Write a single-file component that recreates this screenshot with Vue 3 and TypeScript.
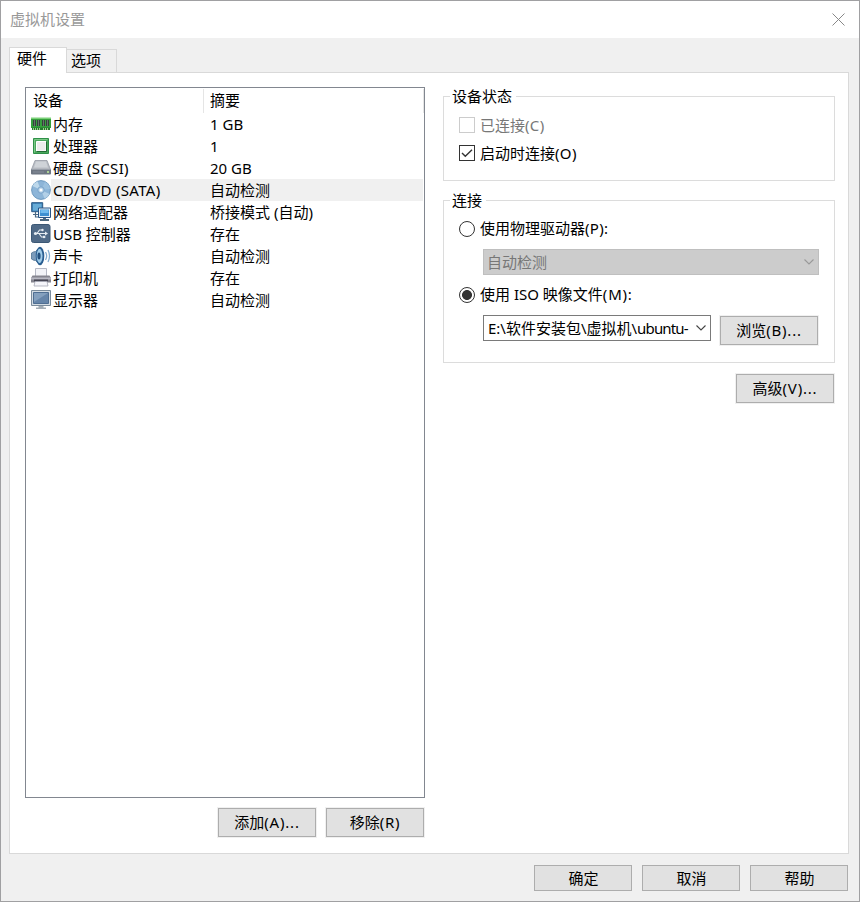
<script setup lang="ts">
import { ref } from 'vue'

interface Device {
  icon: string
  name: string
  latin?: string
  summary: string
}

const devices: Device[] = [
  { icon: 'memory', name: '内存', summary: '1 GB' },
  { icon: 'cpu', name: '处理器', summary: '1' },
  { icon: 'disk', name: '硬盘 ', latin: '(SCSI)', summary: '20 GB' },
  { icon: 'cd', name: '', latin: 'CD/DVD (SATA)', summary: '自动检测' },
  { icon: 'network', name: '网络适配器', summary: '桥接模式 (自动)' },
  { icon: 'usb', name: 'USB 控制器', summary: '存在' },
  { icon: 'sound', name: '声卡', summary: '自动检测' },
  { icon: 'printer', name: '打印机', summary: '存在' },
  { icon: 'display', name: '显示器', summary: '自动检测' },
]
const selected = ref(3)
const connectAtPowerOn = ref(true)
const source = ref<'physical' | 'iso'>('iso')
</script>

<template>
  <div class="window">
    <header class="titlebar">
      <span class="title">虚拟机设置</span>
      <svg class="close" width="13" height="13" viewBox="0 0 13 13"><path d="M.5.5l12 12M12.5.5l-12 12" /></svg>
    </header>

    <nav class="tabs">
      <div class="tab active">硬件</div>
      <div class="tab">选项</div>
    </nav>

    <main class="panel">
      <section class="left">
        <div class="list">
          <div class="head"><span class="c1">设备</span><span class="c2">摘要</span></div>
          <div v-for="(d, i) in devices" :key="d.icon" class="row" @click="selected = i">
            <svg class="icon" width="20" height="20" viewBox="0 0 20 20">
              <template v-if="d.icon === 'memory'">
                <path d="M0 4h20v10H0z" fill="#35a03c" />
                <path d="M0 3.500h20v1.500H0z" fill="#7bd078" />
                <path d="M2 6h3v6H2zM6 6h3v6H6zM11 6h3v6h-3zM15 6h3v6h-3z" fill="#34433a" />
                <path d="M3 6h1v6H3zM7 6h1v6H7zM12 6h1v6h-1zM16 6h1v6h-1z" fill="#64746a" />
                <path d="M1 13.500h18v2.500H1z" fill="#237b2d" />
                <path d="M2.500 14v2M4.500 14v2M6.500 14v2M8.500 14v2M12.500 14v2M14.500 14v2M16.500 14v2" stroke="#c9d9a8" stroke-width=".8" />
              </template>
              <template v-else-if="d.icon === 'cpu'">
                <path d="M2.500 2.500h15v15h-15z" fill="#4aa65c" stroke="#2f9048" />
                <path d="M3.500 16.500V3.500h13" fill="none" stroke="#7cc987" />
                <path d="M5.500 5.500h9.500v9.500H5.500z" fill="#ececec" stroke="#fff" />
                <path d="M15.500 5.500v10h-10" fill="none" stroke="#236b35" />
              </template>
              <template v-else-if="d.icon === 'disk'">
                <path d="M4 2.500h12l3.500 9H.5z" fill="#b9bdc4" stroke="#969ba5" stroke-width=".8" />
                <path d="M5 3.500h10l2 6H3z" fill="#cfd3d8" />
                <rect y="11" width="20" height="5.500" rx="1" fill="#6d7581" />
                <path d="M.5 11.300h19" stroke="#a4aab3" />
                <path d="M2 14h11" stroke="#868e99" />
                <circle cx="17" cy="14" r="1" fill="#c0f09a" />
              </template>
              <template v-else-if="d.icon === 'cd'">
                <circle cx="10" cy="10" r="9.400" fill="#8db5d8" stroke="#6794bb" stroke-width=".9" />
                <path d="M10 10L1.500 6a9 9 0 0 1 5-4.500z" fill="#bdd8eb" />
                <path d="M10 10l8.500 4a9 9 0 0 1-5 4.500z" fill="#b3d0e7" />
                <path d="M10 10l4-8a9 9 0 0 1 5 7z" fill="#9cc1df" />
                <circle cx="10" cy="10" r="3.200" fill="#b3d0e7" stroke="#6e9bc4" stroke-width=".8" />
                <circle cx="10" cy="10" r="1.500" fill="#fff" />
              </template>
              <template v-else-if="d.icon === 'network'">
                <path d="M.7.700h11v9H.7z" fill="#4186bb" stroke="#2b5987" />
                <path d="M2 2h8.500v6.500H2z" fill="#68acd7" />
                <path d="M4.500 10v5h3M2 12.500h5" fill="none" stroke="#496884" stroke-width="1.200" />
                <path d="M7.500 6h12v9.500h-12z" fill="#e2eef6" stroke="#285486" />
                <path d="M9 7.500h9V14H9z" fill="#3d8fd0" />
                <path d="M9.500 8h8v3h-8z" fill="#71bbed" />
                <path d="M12 16h3v1h3v2H9v-2h3z" fill="#4c687f" />
              </template>
              <template v-else-if="d.icon === 'usb'">
                <rect x=".5" y=".5" width="18.500" height="18" rx="2" fill="#506a87" stroke="#3c5875" />
                <path d="M4 9.500h11M6 9.500L8.500 6H11M8 9.500l2.500 3.500H13" fill="none" stroke="#e7edf2" stroke-width="1.100" />
                <circle cx="4.500" cy="9.500" r="1.600" fill="#e7edf2" />
                <path d="M14 7.500l3 2-3 2z" fill="#e7edf2" />
                <circle cx="11.500" cy="6" r="1.200" fill="#e7edf2" />
                <path d="M12 11.800h2.300v2.300H12z" fill="#e7edf2" />
              </template>
              <template v-else-if="d.icon === 'sound'">
                <path d="M.5 7q2-1.500 4-1.500L9 1v18l-4.500-4.500q-2 0-4-1.500z" fill="#7c9cbb" stroke="#4e7292" stroke-width=".8" />
                <ellipse cx="9" cy="10" rx="4.300" ry="9.300" fill="#2a5e91" />
                <ellipse cx="8.600" cy="10" rx="2.900" ry="7.200" fill="#9ecbe8" />
                <ellipse cx="8" cy="10" rx="1.600" ry="3.600" fill="#24517f" />
                <path d="M14.500 6q2.300 4 0 8M17 4q3 6 0 12" fill="none" stroke="#84add0" stroke-width="1.300" />
              </template>
              <template v-else-if="d.icon === 'printer'">
                <path d="M4.500.5h11v8h-11z" fill="#f2f3f7" stroke="#b5b8c4" />
                <path d="M1.500 7.500h17L20 10v4.500H0V10z" fill="#85858f" />
                <path d="M0 9.500h20v2H0z" fill="#b9b9c3" />
                <path d="M3 11.500h14v2H3z" fill="#454552" />
                <path d="M4 13.500h12l1 4.500H3z" fill="#f5f5fa" stroke="#a5a7b4" stroke-width=".8" />
              </template>
              <template v-else>
                <path d="M.5.500h19v15H.5z" fill="#d3dce3" stroke="#7b8c9c" />
                <path d="M2.500 2.500h15v11h-15z" fill="#6685a9" stroke="#4f6e92" />
                <path d="M3 3h14L3 12z" fill="#84a0be" />
                <path d="M7.500 16h5v1.500H15V19H5v-1.500h2.500z" fill="#a3adb6" />
              </template>
            </svg>
            <div class="cells" :class="{ selected: selected === i }">
              <span class="name">{{ d.name }}<span v-if="d.latin" class="wide">{{ d.latin }}</span></span>
              <span class="summary">{{ d.summary }}</span>
            </div>
          </div>
        </div>
        <div class="list-actions">
          <button class="btn">添加<span class="key">(A)...</span></button>
          <button class="btn">移除<span class="key">(R)</span></button>
        </div>
      </section>

      <section class="right">
        <div class="group status">
          <div class="legend"><span>设备状态</span></div>
          <div class="option disabled"><span class="check"></span><span class="text">已连接<span class="wide">(C)</span></span></div>
          <div class="option" @click="connectAtPowerOn = !connectAtPowerOn">
            <span class="check">
              <svg v-if="connectAtPowerOn" width="14" height="14" viewBox="0 0 14 14"><path d="M2 7l3.300 3.300L12 3.700" /></svg>
            </span><span class="text">启动时连接<span class="wide">(O)</span></span>
          </div>
        </div>
        <div class="group connection">
          <div class="legend"><span>连接</span></div>
          <div class="option physical" @click="source = 'physical'">
            <span class="radio" :class="{ on: source === 'physical' }"></span><span class="text">使用物理驱动器<span class="wide">(P):</span></span>
          </div>
          <div class="combo off">
            <span>自动检测</span>
            <svg width="10" height="6" viewBox="0 0 10 6"><path d="M.5.5L5 5 9.500.5" /></svg>
          </div>
          <div class="option iso" @click="source = 'iso'">
            <span class="radio" :class="{ on: source === 'iso' }"></span><span class="text">使用 ISO 映像文件<span class="key">(M):</span></span>
          </div>
          <div class="file">
            <div class="combo">
              <span class="path">E:\软件安装包\虚拟机\<span class="tight">ubuntu-</span></span>
              <svg width="10" height="6" viewBox="0 0 10 6"><path d="M.5.5L5 5 9.500.5" /></svg>
            </div>
            <button class="btn">浏览<span class="key">(B)...</span></button>
          </div>
        </div>
        <button class="btn advanced">高级<span class="key">(V)...</span></button>
      </section>
    </main>

    <footer class="footer">
      <button class="btn">确定</button>
      <button class="btn">取消</button>
      <button class="btn">帮助</button>
    </footer>
    <i class="edge"></i>
  </div>
</template>

<style>
body { margin: 0; }
</style>

<style scoped>
* { box-sizing: border-box; }
.window {
  position: relative;
  width: 860px;
  height: 902px;
  border: 1px solid #a0a0a2;
  background: #f0f0f0;
  color: #000;
  font: 400 15px/20px "Noto Sans", "Noto Sans CJK SC", sans-serif;
  white-space: nowrap;
  overflow: hidden;
}
.wide { letter-spacing: .33px; }
.key { letter-spacing: .8px; }
.tight { letter-spacing: -.85px; }
.edge {
  position: absolute;
  right: -1px;
  top: 306px;
  width: 1px;
  height: 288px;
  background: #1c1c1e;
}
.titlebar {
  display: flex;
  justify-content: space-between;
  height: 37px;
  padding: 8px 14px 0 9px;
  background: #fff;
  color: #999;
}
.close { margin-top: 4px; fill: none; stroke: #888; stroke-width: 1; }
.tabs { display: flex; align-items: flex-end; height: 34px; padding-left: 8px; }
.tab {
  width: 50px;
  height: 23px;
  padding-left: 4px;
  border: 1px solid #d9d9d9;
  border-width: 1px 1px 0 0;
}
.tab.active {
  position: relative;
  z-index: 1;
  width: 58px;
  height: 26px;
  margin-bottom: -1px;
  padding-left: 7px;
  border-left-width: 1px;
  background: #fff;
}
.panel {
  display: flex;
  width: 840px;
  height: 782px;
  margin-left: 8px;
  padding: 14px 13px 0 15px;
  border: 1px solid #d9d9d9;
  background: #fff;
}
.left { width: 400px; }
.list { height: 711px; border: 1px solid #828790; }
.head { display: flex; height: 25px; padding-top: 1px; }
.c1 { width: 178px; padding: 1px 0 0 7px; border-right: 1px solid #e5e5e5; }
.c2 { width: 220px; padding: 1px 0 0 6px; border-right: 1px solid #e5e5e5; }
.row { display: flex; height: 22px; padding-left: 5px; line-height: 22px; }
.icon { flex: none; margin-top: 1px; }
.cells { display: flex; flex: 1; margin-right: 1px; padding-left: 2px; }
.cells.selected { background: #f0f0f0; }
.name { width: 157px; white-space: pre; }
.list-actions { display: flex; justify-content: flex-end; gap: 10px; margin: 10px 1px 0 0; }
.btn {
  width: 98px;
  height: 29px;
  padding: 0;
  border: 1px solid #adadad;
  border-radius: 0;
  background: #e1e1e1;
  box-shadow: 0 0 0 1px #f0f0f0;
  color: #000;
  font: inherit;
  line-height: 24px;
}
.list-actions .btn, .file .btn, .advanced { padding-bottom: 2px; }
.right { width: 392px; margin: 9px 0 0 18px; }
.group { border: 1px solid #dcdcdc; }
.status { height: 85px; }
.connection { height: 163px; margin-top: 19px; }
.legend { height: 17px; padding-left: 6px; line-height: 18px; }
.legend span { display: inline-block; height: 20px; margin-top: -10px; padding: 0 4px 0 2px; background: #fff; vertical-align: top; }
.option { display: flex; align-items: center; height: 28px; padding-left: 15px; }
.text { padding-bottom: 1px; }
.status .option { position: relative; top: -3px; }
.disabled { color: #777; }
.check { width: 16px; height: 16px; margin-right: 5px; border: 1px solid #333; }
.disabled .check { border-color: #ccc; }
.check svg { display: block; fill: none; stroke: #333; stroke-width: 1.400; }
.radio {
  width: 16px;
  height: 16px;
  margin-right: 5px;
  border: 1px solid #333;
  border-radius: 50%;
}
.radio.on { background: radial-gradient(circle, #333 0 4.600px, #fff 5.300px); }
.connection .option { height: 23px; }
.connection .physical { margin-top: -1px; }
.combo {
  display: flex;
  align-items: center;
  justify-content: space-between;
  width: 228px;
  height: 26px;
  padding: 0 4px 0 4px;
  border: 1px solid #7a7a7a;
  background: #fff;
}
.path { padding-bottom: 1px; }
.combo svg { flex: none; fill: none; stroke: #444; stroke-width: 1.100; }
.combo.off { width: 336px; margin: 9px 0 0 39px; padding-left: 3px; border-color: #bfbfbf; background: #ccc; color: #777; }
.combo.off svg { stroke: #999; }
.connection .iso { margin-top: 8px; }
.file { display: flex; gap: 9px; margin: 9px 0 0 39px; }
.file .btn { margin-top: 1px; }
.advanced { display: block; margin: 11px 1px 0 auto; }
.footer { display: flex; justify-content: flex-end; gap: 10px; padding: 11px 11px 0 0; }
.footer .btn { height: 26px; padding-left: 1px; box-shadow: none; line-height: 24px; }
</style>
